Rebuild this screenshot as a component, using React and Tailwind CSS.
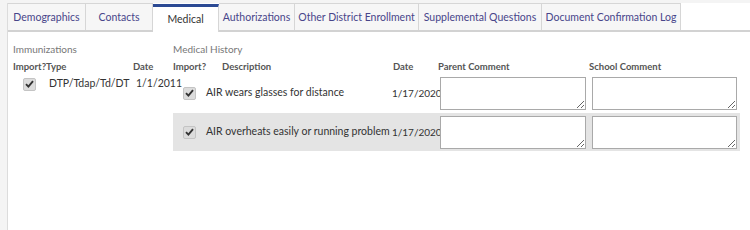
import React from 'react';

const TABS = [
  { label: 'Demographics', w: 'w-[78px]' },
  { label: 'Contacts', w: 'w-[67px]' },
  { label: 'Medical', w: 'w-[66px]', active: true },
  { label: 'Authorizations', w: 'w-[76px]' },
  { label: 'Other District Enrollment', w: 'w-[124px]' },
  { label: 'Supplemental Questions', w: 'w-[123px]' },
  { label: 'Document Confirmation Log', w: 'w-[139px]' },
];

const HISTORY = [
  { desc: 'AIR wears glasses for distance', date: '1/17/2020' },
  { desc: 'AIR overheats easily or running problem', date: '1/17/2020', shaded: true },
];

function Check() {
  return (
    <span className="flex items-center justify-center w-[13px] h-[13px] rounded-[2px] bg-[#dcdcdc] border border-[#c4c4c4]">
      <svg width="9" height="8" viewBox="0 0 9 8">
        <path d="M1 4.2 L3.4 6.6 L8 1.2" fill="none" stroke="#333" strokeWidth="1.9" />
      </svg>
    </span>
  );
}

function Comment() {
  return (
    <textarea className="block w-full h-full resize border border-[#a9a9a9] bg-white outline-none" />
  );
}

export default function App() {
  return (
    <div
      className="w-[750px] h-[230px] bg-[#f4f4f4] pt-[3px] pl-[7px] flex overflow-hidden text-[#333]"
      style={{ fontFamily: 'Lato, "Open Sans", sans-serif' }}
    >
      <div className="flex-1 bg-white border-l border-[#dcdcdc] flex flex-col">
        {/* tabs */}
        <div className="flex items-end h-[29px] border-b-2 border-[#d2d2d2] bg-white">
          {TABS.map(({ label, w, active }) =>
            active ? (
              <div
                key={label}
                className={`${w} shrink-0 h-[28px] -mb-[2px] pt-[1px] flex items-center justify-center bg-white border-t-[3px] border-[#2c4a94] border-r border-r-[#d6d6d6] text-[10.5px] text-[#333]`}
              >
                {label}
              </div>
            ) : (
              <div
                key={label}
                className={`${w} shrink-0 h-[27px] pt-[1px] flex items-center justify-center bg-[#f6f6f6] border-t border-r border-[#d6d6d6] text-[10.5px] text-[#48458a] whitespace-nowrap`}
              >
                {label}
              </div>
            )
          )}
        </div>

        <div className="flex pt-[10px]">
          {/* immunizations */}
          <div className="w-[165px] shrink-0 pl-[5px]">
            <div className="text-[10px] text-[#777] h-[16px]">Immunizations</div>
            <div className="flex text-[9.5px] font-bold text-[#555] h-[14px] items-center mt-[2px]">
              <span className="w-[33px] shrink-0">Import?</span>
              <span className="w-[87px] shrink-0">Type</span>
              <span>Date</span>
            </div>
            <div className="flex items-center h-[18px] mt-[1px] text-[10.5px] whitespace-nowrap">
              <span className="w-[36px] shrink-0 pl-[10px]"><Check /></span>
              <span className="w-[87px] shrink-0">DTP/Tdap/Td/DT</span>
              <span className="shrink-0">1/1/2011</span>
            </div>
          </div>

          {/* medical history */}
          <div className="flex-1 pr-[10px]">
            <div className="text-[10px] text-[#777] h-[16px]">Medical History</div>
            <div className="flex text-[9.5px] font-bold text-[#555] h-[14px] items-center mt-[2px]">
              <span className="w-[49px] shrink-0">Import?</span>
              <span className="w-[171px] shrink-0">Description</span>
              <span className="w-[45px] shrink-0">Date</span>
              <span className="w-[151px] shrink-0">Parent Comment</span>
              <span>School Comment</span>
            </div>
            <div className="flex flex-col gap-[1px]">
              {HISTORY.map(({ desc, date, shaded }) => (
                <div
                  key={desc}
                  className={`flex items-center h-[38px] text-[10.5px] whitespace-nowrap ${shaded ? 'bg-[#e4e4e4]' : ''}`}
                >
                  <span className="w-[33px] shrink-0 pl-[10px]"><Check /></span>
                  <span className="w-[186px] shrink-0">{desc}</span>
                  <span className="w-[48px] shrink-0 text-[10px]">{date}</span>
                  <span className="w-[146px] shrink-0 h-[33px] mr-[6px]"><Comment /></span>
                  <span className="w-[145px] shrink-0 h-[33px]"><Comment /></span>
                </div>
              ))}
            </div>
          </div>
        </div>
      </div>
    </div>
  );
}
